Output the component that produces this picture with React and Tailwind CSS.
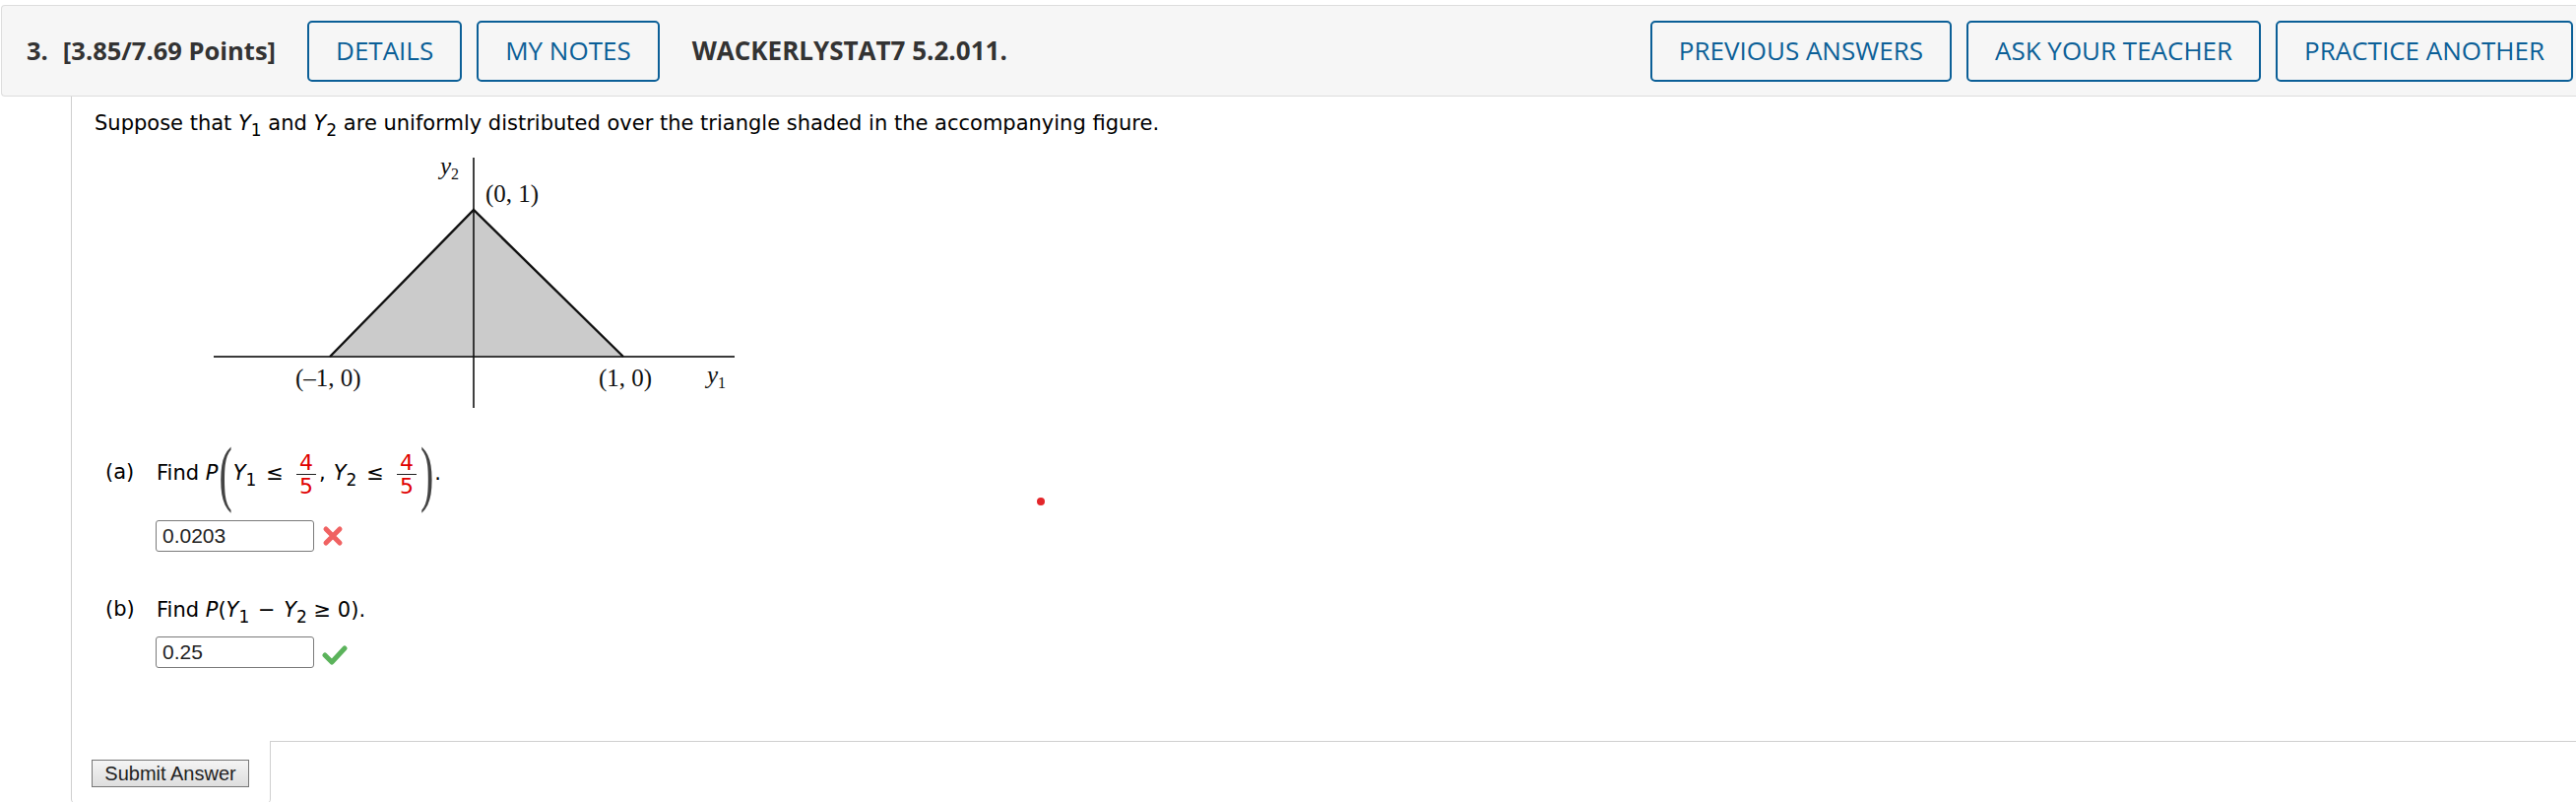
import React from 'react';

const HeaderButton = ({ children, className = '' }) => (
  <button
    className={`h-[62px] px-[27px] border-2 border-[#0b5f97] rounded-[5px] text-[26px] text-[#0b5f97] font-normal bg-transparent whitespace-nowrap ${className}`}
  >
    {children}
  </button>
);

const Sub = ({ children }) => (
  <sub className="bottom-[-6px] text-[17px] not-italic">{children}</sub>
);

const Y = ({ n }) => (
  <span>
    <i>Y</i>
    <Sub>{n}</Sub>
  </span>
);

const Frac = ({ num, den }) => (
  <span className="inline-flex flex-col items-center align-middle mx-[3px] text-[22px] text-[#e00000] leading-[23px]">
    <span className="px-[3px]">{num}</span>
    <span className="block w-full h-px bg-[#222]" />
    <span className="px-[3px]">{den}</span>
  </span>
);

const BigParen = ({ ch }) => (
  <span className="inline-block align-middle scale-y-[1.85] text-[40px] leading-[40px] text-[#444] font-['Liberation_Serif',serif] mx-[1px]">
    {ch}
  </span>
);

const WrongMark = () => (
  <svg width="22" height="22" viewBox="0 0 22 22" className="ml-[8px]">
    <path d="M4 4 L18 18 M18 4 L4 18" stroke="#f06262" strokeWidth="5" strokeLinecap="round" />
  </svg>
);

const RightMark = () => (
  <svg width="26" height="22" viewBox="0 0 26 22" className="ml-[8px] mt-[8px]">
    <path d="M3 11 L10 18 L23 4" fill="none" stroke="#5bb35b" strokeWidth="5" strokeLinecap="round" strokeLinejoin="round" />
  </svg>
);

const Figure = () => (
  <svg width="560" height="262" viewBox="0 0 560 262" className="block ml-[104px] mt-[15px]">
    <polygon points="135,207 281,58 433,207" fill="#cbcbcb" />
    <line x1="17" y1="207" x2="546" y2="207" stroke="#3a3a3a" strokeWidth="2.2" />
    <line x1="281" y1="5" x2="281" y2="259" stroke="#111" strokeWidth="1.6" />
    <polyline points="135,207 281,58 433,207" fill="none" stroke="#111" strokeWidth="2.4" />
    <g fontFamily="'Liberation Serif', serif" fontSize="25" fill="#111">
      <text x="247" y="22" fontStyle="italic">
        y<tspan fontSize="16" fontStyle="normal" dy="5">2</tspan>
      </text>
      <text x="293" y="50">(0, 1)</text>
      <text x="100" y="237">(–1, 0)</text>
      <text x="408" y="237">(1, 0)</text>
      <text x="518" y="234" fontStyle="italic">
        y<tspan fontSize="16" fontStyle="normal" dy="5">1</tspan>
      </text>
    </g>
  </svg>
);

export default function App() {
  return (
    <div className="relative w-[2616px] h-[814px] bg-white overflow-hidden font-['DejaVu_Sans',sans-serif] text-[21px] text-black">
      <div className="pt-[5px] pl-[1px]">
        <div className="h-[93px] flex items-center border-y border-l border-[#dddddd] rounded-l-[4px] bg-[#f6f6f6] font-['Open_Sans',sans-serif] text-[#333]">
          <div className="ml-[25px] text-[25.5px] font-bold whitespace-nowrap">
            3.<span className="ml-[15px]">[3.85/7.69 Points]</span>
          </div>
          <HeaderButton className="ml-[32px]">DETAILS</HeaderButton>
          <HeaderButton className="ml-[15px]">MY NOTES</HeaderButton>
          <div className="ml-[33px] text-[26px] font-bold whitespace-nowrap">WACKERLYSTAT7 5.2.011.</div>
          <div className="ml-auto mr-[3px] flex gap-[15px]">
            <HeaderButton>PREVIOUS ANSWERS</HeaderButton>
            <HeaderButton>ASK YOUR TEACHER</HeaderButton>
            <HeaderButton>PRACTICE ANOTHER</HeaderButton>
          </div>
        </div>
      </div>

      <div className="ml-[72px] flex flex-col">
        <div className="h-[654px] border-l border-[#cfcfcf] pl-[23px]">
          <p className="pt-[12px] leading-[30px] whitespace-nowrap">
            Suppose that <Y n="1" /> and <Y n="2" /> are uniformly distributed over the triangle shaded in the accompanying figure.
          </p>

          <Figure />

          <div className="mt-[31px] h-[64px] flex items-center">
            <span className="ml-[11px] w-[52px] shrink-0">(a)</span>
            <span className="leading-[64px] whitespace-nowrap">
              Find <i>P</i>
              <BigParen ch="(" />
              <Y n="1" />
              <span className="mx-[10px]">≤</span>
              <Frac num="4" den="5" />
              <span>,</span>
              <span className="ml-[8px]"><Y n="2" /></span>
              <span className="mx-[10px]">≤</span>
              <Frac num="4" den="5" />
              <BigParen ch=")" />
              <span>.</span>
            </span>
          </div>
          <div className="ml-[62px] mt-[16px] flex items-center">
            <div className="w-[161px] h-[32px] border border-[#7a7a7a] rounded-[3px] flex items-center pl-[6px] font-['Liberation_Sans',sans-serif] text-[21px] text-[#222]">
              0.0203
            </div>
            <WrongMark />
          </div>

          <div className="mt-[44px] h-[30px] flex items-center">
            <span className="ml-[11px] w-[52px] shrink-0">(b)</span>
            <span className="leading-[30px] whitespace-nowrap">
              Find <i>P</i>(<Y n="1" /> <span className="mx-[2px]">−</span> <Y n="2" /> ≥ 0).
            </span>
          </div>
          <div className="ml-[62px] mt-[12px] flex items-start">
            <div className="w-[161px] h-[32px] border border-[#7a7a7a] rounded-[3px] flex items-center pl-[6px] font-['Liberation_Sans',sans-serif] text-[21px] text-[#222]">
              0.25
            </div>
            <RightMark />
          </div>
        </div>

        <div className="flex">
          <div className="w-[203px] h-[64px] border-l border-r border-b border-[#cfcfcf] rounded-b-[5px] pl-[20px] pt-[18px]">
            <button className="w-[160px] h-[28px] border border-[#777] bg-gradient-to-b from-[#f4f4f4] to-[#dedede] font-['Liberation_Sans',sans-serif] text-[20px] leading-[20px] text-[#222]">
              Submit Answer
            </button>
          </div>
          <div className="flex-1 border-t border-[#cfcfcf]" />
        </div>
      </div>

      <div className="absolute left-[1053px] top-[505px] w-[8px] h-[8px] rounded-full bg-[#e3262a]" />
    </div>
  );
}
